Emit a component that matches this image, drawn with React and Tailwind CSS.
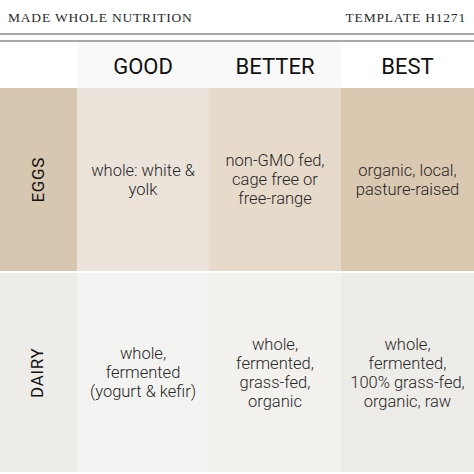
import React from 'react';

const columns = ['GOOD', 'BETTER', 'BEST'];

const rows = [
    {
        label: 'EGGS',
        labelBg: 'bg-[#d8c7b0]',
        cells: [
            { bg: 'bg-[#ebe3da]', lines: ['whole: white &', 'yolk'] },
            { bg: 'bg-[#e6dacb]', lines: ['non-GMO fed,', 'cage free or', 'free-range'] },
            { bg: 'bg-[#dac8b1]', lines: ['organic, local,', 'pasture-raised'] },
        ],
        height: 'h-[183px]',
    },
    {
        label: 'DAIRY',
        labelBg: 'bg-[#eeece8]',
        cells: [
            { bg: 'bg-[#f3f3f1]', lines: ['whole,', 'fermented', '(yogurt & kefir)'] },
            { bg: 'bg-[#f2f1ee]', lines: ['whole,', 'fermented,', 'grass-fed,', 'organic'] },
            { bg: 'bg-[#eeece8]', lines: ['whole,', 'fermented,', '100% grass-fed,', 'organic, raw'] },
        ],
        height: 'h-[199px]',
    },
];

export default function App() {
    return (
        <div className="w-[474px] h-[474px] bg-white overflow-hidden flex flex-col">
            <div className="flex justify-between items-center px-[8px] h-[33px] pt-[3px] text-[13.5px] tracking-[0.06em] text-[#2a2a2a]" style={{ fontFamily: '"Liberation Serif", serif' }}>
                <span>MADE WHOLE NUTRITION</span>
                <span>TEMPLATE H1271</span>
            </div>
            <div className="h-[2px] bg-[#a8a8a8]" />
            <div className="h-[5px]" />
            <div className="h-[2px] bg-[#a8a8a8]" />

            <div className="grid grid-cols-[77px_132px_132px_133px] h-[46px]" style={{ fontFamily: 'Roboto, sans-serif' }}>
                <div />
                {columns.map((c, i) => (
                    <div key={c} className={`flex items-center justify-center pt-[2px] text-[22px] text-[#111] ${i < 2 ? 'bg-[#f9f9f9]' : ''}`}>
                        {c}
                    </div>
                ))}
            </div>

            {rows.map((row, ri) => (
                <div key={row.label} className={`grid grid-cols-[77px_132px_132px_133px] ${row.height} ${ri === 0 ? 'mb-[2px]' : ''}`}>
                    <div className={`${row.labelBg} flex items-center justify-center`}>
                        <span className="-rotate-90 text-[17px] tracking-[0.04em] text-[#111] whitespace-nowrap" style={{ fontFamily: 'Roboto, sans-serif' }}>
                            {row.label}
                        </span>
                    </div>
                    {row.cells.map((cell, ci) => (
                        <div key={ci} className={`${cell.bg} flex flex-col items-center justify-center text-center text-[16.5px] leading-[19px] font-light text-[#262626]`} style={{ fontFamily: 'Roboto, sans-serif' }}>
                            {cell.lines.map((l) => (
                                <span key={l}>{l}</span>
                            ))}
                        </div>
                    ))}
                </div>
            ))}
        </div>
    );
}
